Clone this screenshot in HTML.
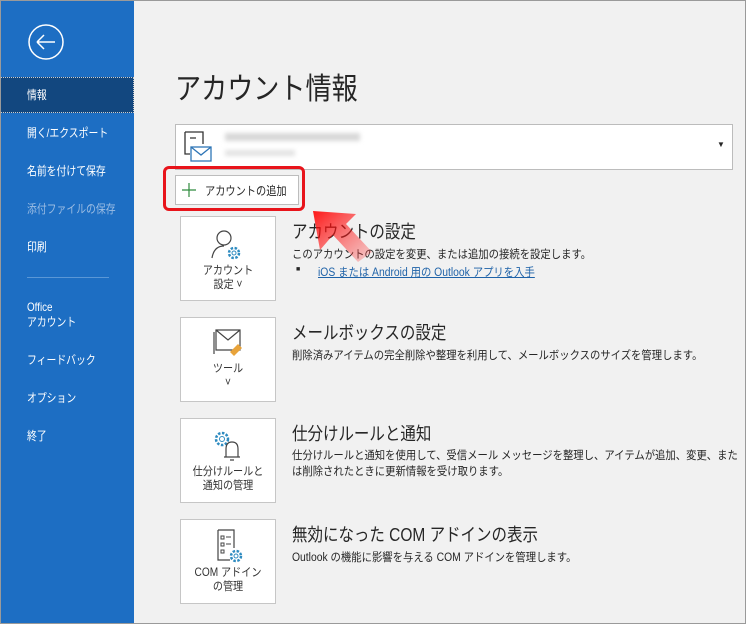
<!DOCTYPE html>
<html><head><meta charset="utf-8"><style>
*{margin:0;padding:0;box-sizing:border-box}
body{width:746px;height:624px;overflow:hidden;background:#f1f1f1;font-family:"Liberation Sans","Noto Sans CJK JP",sans-serif;position:relative;color:#262626}
#side{position:absolute;left:0;top:0;width:134px;height:624px;background:#1d6ec3;color:#fff}
.it{position:absolute;left:27px;font-size:12px;line-height:15px;white-space:nowrap;transform:scaleX(.82);transform-origin:left}
#sel{position:absolute;left:0;top:77px;width:134px;height:36px;background:#12477f;border:1px dotted #ccc}
.a{position:absolute;font-size:12px;white-space:nowrap}
.tile{position:absolute;left:180px;width:96px;height:85px;background:#fff;border:1px solid #c6c6c6;text-align:center;font-size:11.5px;line-height:14px;color:#333}
.tile div{transform:scaleX(.88);white-space:nowrap}
.h{position:absolute;left:292px;font-size:18px;color:#262626;white-space:nowrap;transform:scaleX(.86);transform-origin:left}
.d{position:absolute;left:292px;font-size:11.5px;color:#262626;white-space:nowrap;transform:scaleX(.9);transform-origin:left}
</style></head><body>
<div id="side">
<svg style="position:absolute;left:27px;top:24px" width="38" height="38"><circle cx="19" cy="18" r="17" fill="none" stroke="#fff" stroke-width="1.5"/><path d="M10 18H28M10 18l7-7M10 18l7 7" stroke="#fff" stroke-width="1.5" fill="none"/></svg>
<div id="sel"></div>
<div class="it" style="top:88px">情報</div>
<div class="it" style="top:126px">開く/エクスポート</div>
<div class="it" style="top:164px">名前を付けて保存</div>
<div class="it" style="top:202px;color:#9cbde3">添付ファイルの保存</div>
<div class="it" style="top:240px">印刷</div>
<div style="position:absolute;left:27px;top:277px;width:82px;height:1px;background:#5a97d6"></div>
<div class="it" style="top:300px">Office<br>アカウント</div>
<div class="it" style="top:353px">フィードバック</div>
<div class="it" style="top:391px">オプション</div>
<div class="it" style="top:429px">終了</div>
</div>
<div class="a" style="left:175px;top:64px;font-size:30px;color:#262626;transform:scaleX(.87);transform-origin:left">アカウント情報</div>
<div style="position:absolute;left:175px;top:124px;width:558px;height:46px;background:#fff;border:1px solid #bcbcbc"></div>
<svg style="position:absolute;left:182px;top:130px" width="32" height="34"><path d="M3 2h18v12M3 2v22h5M8 8h6" stroke="#333" fill="none" stroke-width="1.3"/><rect x="9" y="17" width="20" height="14" fill="#fff" stroke="#2e75b6" stroke-width="1.3"/><path d="M9 17l10 8 10-8" stroke="#2e75b6" fill="none" stroke-width="1.3"/></svg>
<div style="position:absolute;left:225px;top:133px;width:135px;height:8px;background:#d8d8d8;filter:blur(2px)"></div>
<div style="position:absolute;left:225px;top:150px;width:70px;height:6px;background:#e3e3e3;filter:blur(2px)"></div>
<div class="a" style="left:717px;top:140px;font-size:8px">▼</div>
<div style="position:absolute;left:163px;top:166px;width:142px;height:45px;border:3px solid #e8141b;border-radius:6px"></div>
<div style="position:absolute;left:175px;top:175px;width:124px;height:30px;background:#fff;border:1px solid #bdbdbd"></div>
<svg style="position:absolute;left:181px;top:182px" width="16" height="16"><path d="M8 1v14M1 8h14" stroke="#2e8b3d" stroke-width="1.2"/></svg>
<div class="a" style="left:205px;top:182px;transform:scaleX(.85);transform-origin:left">アカウントの追加</div>

<div class="tile" style="top:216px"><svg width="40" height="40" style="margin-top:9px"><circle cx="16" cy="12" r="7" fill="none" stroke="#444" stroke-width="1.2"/><path d="M4 32q2-12 12-12" fill="none" stroke="#444" stroke-width="1.2"/><circle cx="26" cy="27" r="5" fill="none" stroke="#2e8bc0" stroke-width="2.5" stroke-dasharray="2.5 1.5"/><circle cx="26" cy="27" r="2" fill="none" stroke="#2e8bc0"/></svg><div style="margin-top:-6px">アカウント<br>設定 ˅</div></div>
<div class="h" style="top:218px">アカウントの設定</div>
<div class="d" style="top:246px">このアカウントの設定を変更、または追加の接続を設定します。</div>
<div class="a" style="top:266px;left:296px;font-size:7px">■</div>
<div class="d" style="top:264px;left:318px;color:#1e62a8;text-decoration:underline">iOS または Android 用の Outlook アプリを入手</div>

<div class="tile" style="top:317px"><svg width="40" height="36" style="margin-top:8px"><path d="M6 6v22M8 4h24v20H8zM8 4l12 10 12-10" fill="none" stroke="#444" stroke-width="1.2"/><path d="M22 26l8-8 4 4-8 8z" fill="#e8a33a"/></svg><div style="margin-top:-4px">ツール<br>˅</div></div>
<div class="h" style="top:319px">メールボックスの設定</div>
<div class="d" style="top:347px">削除済みアイテムの完全削除や整理を利用して、メールボックスのサイズを管理します。</div>

<div class="tile" style="top:418px"><svg width="40" height="36" style="margin-top:8px"><circle cx="14" cy="12" r="6" fill="none" stroke="#2e8bc0" stroke-width="2.5" stroke-dasharray="2.5 1.5"/><circle cx="14" cy="12" r="2.5" fill="none" stroke="#2e8bc0"/><path d="M18 30v-8q0-7 6-7t6 7v8zM16 30h16M22 33h4" fill="none" stroke="#444" stroke-width="1.2"/></svg><div style="margin-top:-2px">仕分けルールと<br>通知の管理</div></div>
<div class="h" style="top:420px">仕分けルールと通知</div>
<div class="d" style="top:448px;line-height:16px">仕分けルールと通知を使用して、受信メール メッセージを整理し、アイテムが追加、変更、また<br>は削除されたときに更新情報を受け取ります。</div>

<div class="tile" style="top:519px"><svg width="40" height="38" style="margin-top:8px"><path d="M10 2h16v18M10 2v30h12" fill="none" stroke="#444" stroke-width="1.2"/><path d="M13 8h3v3h-3zM13 15h3v3h-3zM13 22h3v3h-3zM18 9h5M18 16h5" fill="none" stroke="#444"/><circle cx="28" cy="28" r="5" fill="none" stroke="#2e8bc0" stroke-width="2.5" stroke-dasharray="2.5 1.5"/><circle cx="28" cy="28" r="2" fill="none" stroke="#2e8bc0"/></svg><div style="margin-top:-4px">COM アドイン<br>の管理</div></div>
<div class="h" style="top:521px">無効になった COM アドインの表示</div>
<div class="d" style="top:549px">Outlook の機能に影響を与える COM アドインを管理します。</div>

<svg style="position:absolute;left:0;top:0" width="746" height="624"><defs><linearGradient id="g" x1="0" y1="0" x2="1" y2="1"><stop offset="0" stop-color="#f00" stop-opacity=".9"/><stop offset="1" stop-color="#f33" stop-opacity=".2"/></linearGradient></defs><polygon points="313,211 356,214 346,224 372,252 358,262 333,235 320,250" fill="url(#g)"/></svg>
<div style="position:absolute;left:0;top:0;width:746px;height:624px;border:1px solid #9a9a9a"></div>
</body></html>
